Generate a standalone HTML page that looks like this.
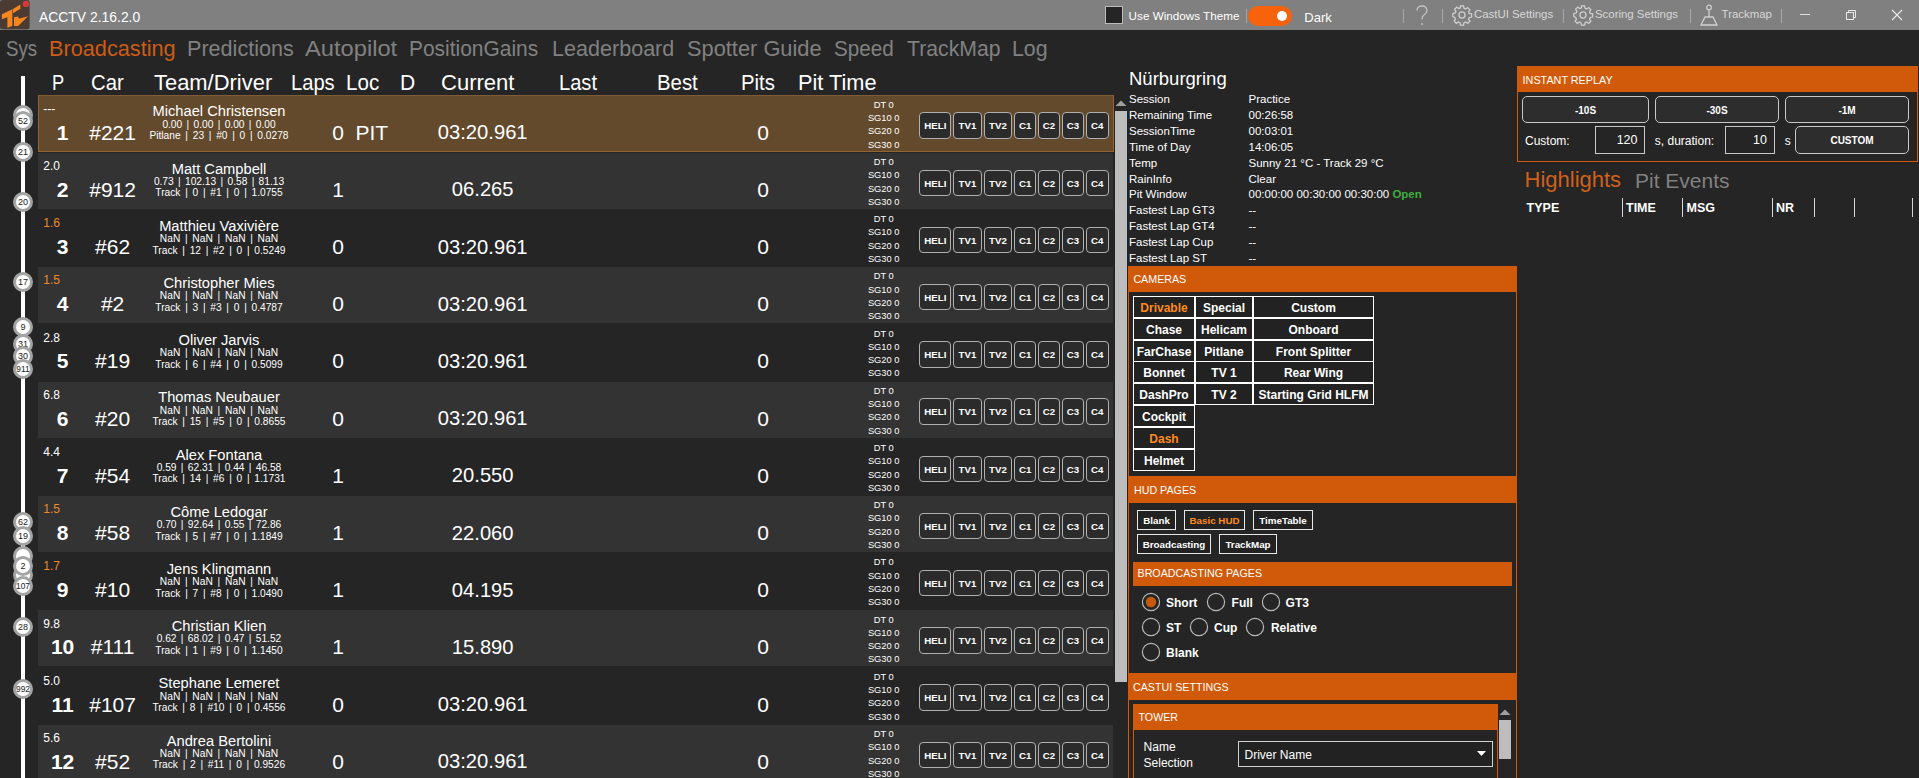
<!DOCTYPE html>
<html><head><meta charset="utf-8"><style>
html,body{margin:0;padding:0;}
body{width:1919px;height:778px;overflow:hidden;background:#252525;position:relative;font-family:"Liberation Sans",sans-serif;}
.t{position:absolute;line-height:1;white-space:nowrap;}
.r{position:absolute;}
.btn{position:absolute;box-sizing:border-box;border:1px solid #b0b0b0;border-radius:4px;background:#2b2b2b;color:#fff;font-weight:bold;font-size:9.7px;text-align:center;}
.mk{position:absolute;left:13px;width:20px;height:20px;box-sizing:border-box;border:3px solid #a4a4a4;border-radius:50%;background:#fff;text-align:center;line-height:14px;color:#1a1a1a;}
.cell{position:absolute;box-sizing:border-box;border:1px solid #fff;background:#222;font-weight:bold;font-size:12px;text-align:center;}
.hud{position:absolute;box-sizing:border-box;border:1px solid #e8e8e8;background:#222;font-weight:bold;font-size:9.8px;text-align:center;}
.rb{position:absolute;box-sizing:border-box;border:1.5px solid #c8c8c8;border-radius:5px;background:#2d2d2d;color:#fff;font-weight:bold;font-size:10px;text-align:center;}
</style></head><body>
<div class="r" style="left:0px;top:0px;width:1919px;height:30px;background:#808080"></div>
<svg class="r" style="left:0;top:0" width="30" height="30" viewBox="0 0 30 30">
<rect x="0" y="0" width="29.6" height="29.3" rx="2.5" fill="#4b3b32"/>
<path d="M1.85 14.2 L12.35 9.25 L12.35 25.7 L7.4 28 L7.4 17.3 L1.85 19.3 Z" fill="#f7861f"/>
<path d="M13 9.05 L20.4 4.5 L20.4 8.85 L13 13.2 Z" fill="#f7861f"/>
<path d="M14 17.3 L18.1 16.5 L18.9 18.7 L28 16.2 L18.1 25.9 L14 25.9 Z" fill="#f7861f"/>
<circle cx="25.9" cy="3.9" r="3.2" fill="#d43a3a"/>
</svg>
<div class="t" style="left:38.50px;top:9.65px;font-size:14px;color:#ffffff;transform:scaleX(0.9928);transform-origin:left;">ACCTV 2.16.2.0</div>
<div class="r" style="left:1105px;top:6px;width:18px;height:18px;background:#252525;border:1px solid #bcbcbc;box-sizing:border-box"></div>
<div class="t" style="left:1128.60px;top:10.10px;font-size:11.7px;color:#ffffff;">Use Windows Theme</div>
<div class="r" style="left:1246px;top:9px;width:1px;height:14px;background:#a8a8a8"></div>
<div class="r" style="left:1248px;top:6px;width:44px;height:20px;background:#f7630c;border-radius:10px"></div>
<div class="r" style="left:1277px;top:11px;width:10px;height:10px;background:#fff;border-radius:50%"></div>
<div class="t" style="left:1304.30px;top:10.90px;font-size:13px;color:#ffffff;">Dark</div>
<div class="r" style="left:1403px;top:9px;width:1px;height:14px;background:#a8a8a8"></div>
<svg class="r" style="left:1415px;top:5px" width="14" height="21" viewBox="0 0 14 21"><path d="M2 5.5 C2 2.5 4.5 1 7 1 C10 1 12 3 12 5.5 C12 8 10.5 9 8.5 10.5 C7.3 11.4 7 12.5 7 14.5" fill="none" stroke="#c4c4c4" stroke-width="1.3"/><circle cx="7" cy="19" r="0.9" fill="#c4c4c4"/></svg>
<div class="r" style="left:1442px;top:9px;width:1px;height:14px;background:#a8a8a8"></div>
<svg class="r" style="left:1451px;top:4px" width="22" height="22" viewBox="0 0 24 24"><path fill="none" stroke="#cfcfcf" stroke-width="1.4" d="M10.3 2h3.4l.5 2.6 1.8.8 2.2-1.5 2.4 2.4-1.5 2.2.8 1.8 2.6.5v3.4l-2.6.5-.8 1.8 1.5 2.2-2.4 2.4-2.2-1.5-1.8.8-.5 2.6h-3.4l-.5-2.6-1.8-.8-2.2 1.5-2.4-2.4 1.5-2.2-.8-1.8L2 13.7v-3.4l2.6-.5.8-1.8-1.5-2.2 2.4-2.4 2.2 1.5 1.8-.8z"/><circle cx="12" cy="12" r="3.3" fill="none" stroke="#cfcfcf" stroke-width="1.4"/></svg>
<div class="t" style="left:1474.00px;top:8.95px;font-size:11.4px;color:#d8d8d8;">CastUI Settings</div>
<div class="r" style="left:1563px;top:9px;width:1px;height:14px;background:#a8a8a8"></div>
<svg class="r" style="left:1572px;top:4px" width="22" height="22" viewBox="0 0 24 24"><path fill="none" stroke="#cfcfcf" stroke-width="1.4" d="M10.3 2h3.4l.5 2.6 1.8.8 2.2-1.5 2.4 2.4-1.5 2.2.8 1.8 2.6.5v3.4l-2.6.5-.8 1.8 1.5 2.2-2.4 2.4-2.2-1.5-1.8.8-.5 2.6h-3.4l-.5-2.6-1.8-.8-2.2 1.5-2.4-2.4 1.5-2.2-.8-1.8L2 13.7v-3.4l2.6-.5.8-1.8-1.5-2.2 2.4-2.4 2.2 1.5 1.8-.8z"/><circle cx="12" cy="12" r="3.3" fill="none" stroke="#cfcfcf" stroke-width="1.4"/></svg>
<div class="t" style="left:1595.00px;top:8.95px;font-size:11.4px;color:#d8d8d8;">Scoring Settings</div>
<div class="r" style="left:1690px;top:9px;width:1px;height:14px;background:#a8a8a8"></div>
<svg class="r" style="left:1699px;top:4px" width="20" height="22" viewBox="0 0 20 22"><circle cx="10" cy="3.5" r="2.3" fill="none" stroke="#cfcfcf" stroke-width="1.3"/><path d="M10 6 V13 M6 13 H14 L18 21 H2 L6 13 Z" fill="none" stroke="#cfcfcf" stroke-width="1.3"/></svg>
<div class="t" style="left:1721.60px;top:8.95px;font-size:11.4px;color:#d8d8d8;">Trackmap</div>
<div class="r" style="left:1781px;top:9px;width:1px;height:14px;background:#a8a8a8"></div>
<div class="r" style="left:1800px;top:14px;width:10px;height:1px;background:#e0e0e0"></div>
<svg class="r" style="left:1845px;top:9px" width="12" height="12" viewBox="0 0 12 12"><rect x="1.5" y="3.5" width="7" height="7" fill="none" stroke="#e8e8e8" stroke-width="1"/><path d="M3.5 3.5 V1.5 H10.5 V8.5 H8.5" fill="none" stroke="#e8e8e8" stroke-width="1"/></svg>
<svg class="r" style="left:1891px;top:9px" width="12" height="12" viewBox="0 0 12 12"><path d="M1 1 L11 11 M11 1 L1 11" stroke="#eaeaea" stroke-width="1.1"/></svg>
<div class="t" style="left:5.60px;top:38.25px;font-size:22.5px;color:#818181;transform:scaleX(0.8317);transform-origin:left;">Sys</div>
<div class="t" style="left:48.80px;top:38.25px;font-size:22.5px;color:#cc5c16;transform:scaleX(0.9646);transform-origin:left;">Broadcasting</div>
<div class="t" style="left:186.80px;top:38.25px;font-size:22.5px;color:#818181;transform:scaleX(0.9595);transform-origin:left;">Predictions</div>
<div class="t" style="left:305.20px;top:38.25px;font-size:22.5px;color:#818181;transform:scaleX(1.0530);transform-origin:left;">Autopilot</div>
<div class="t" style="left:409.20px;top:38.25px;font-size:22.5px;color:#818181;transform:scaleX(0.9306);transform-origin:left;">PositionGains</div>
<div class="t" style="left:552.00px;top:38.25px;font-size:22.5px;color:#818181;transform:scaleX(0.9584);transform-origin:left;">Leaderboard</div>
<div class="t" style="left:686.80px;top:38.25px;font-size:22.5px;color:#818181;transform:scaleX(0.9694);transform-origin:left;">Spotter Guide</div>
<div class="t" style="left:834.00px;top:38.25px;font-size:22.5px;color:#818181;transform:scaleX(0.9176);transform-origin:left;">Speed</div>
<div class="t" style="left:906.90px;top:38.25px;font-size:22.5px;color:#818181;transform:scaleX(0.9427);transform-origin:left;">TrackMap</div>
<div class="t" style="left:1011.80px;top:38.25px;font-size:22.5px;color:#818181;transform:scaleX(0.9481);transform-origin:left;">Log</div>
<div class="t" style="left:52.00px;top:72.60px;font-size:21.5px;color:#ffffff;transform:scaleX(0.8505);transform-origin:left;">P</div>
<div class="t" style="left:91.40px;top:72.60px;font-size:21.5px;color:#ffffff;transform:scaleX(0.9464);transform-origin:left;">Car</div>
<div class="t" style="left:153.80px;top:72.60px;font-size:21.5px;color:#ffffff;transform:scaleX(1.0199);transform-origin:left;">Team/Driver</div>
<div class="t" style="left:290.50px;top:72.60px;font-size:21.5px;color:#ffffff;transform:scaleX(0.9373);transform-origin:left;">Laps</div>
<div class="t" style="left:346.00px;top:72.60px;font-size:21.5px;color:#ffffff;transform:scaleX(0.9575);transform-origin:left;">Loc</div>
<div class="t" style="left:400.00px;top:72.60px;font-size:21.5px;color:#ffffff;transform:scaleX(0.9787);transform-origin:left;">D</div>
<div class="t" style="left:440.70px;top:72.60px;font-size:21.5px;color:#ffffff;transform:scaleX(1.0251);transform-origin:left;">Current</div>
<div class="t" style="left:558.70px;top:72.60px;font-size:21.5px;color:#ffffff;transform:scaleX(0.9350);transform-origin:left;">Last</div>
<div class="t" style="left:657.40px;top:72.60px;font-size:21.5px;color:#ffffff;transform:scaleX(0.9481);transform-origin:left;">Best</div>
<div class="t" style="left:740.60px;top:72.60px;font-size:21.5px;color:#ffffff;transform:scaleX(0.9458);transform-origin:left;">Pits</div>
<div class="t" style="left:798.40px;top:72.60px;font-size:21.5px;color:#ffffff;transform:scaleX(1.0122);transform-origin:left;">Pit Time</div>
<div class="r" style="left:21px;top:76px;width:4px;height:702px;background:#ffffff"></div>
<div class="r" style="left:38px;top:95.0px;width:1076px;height:57px;background:#634a2c;border:1px solid #94652f;border-top-color:#7f5c33;box-sizing:border-box"></div>
<div class="t" style="left:43.30px;top:102.84px;font-size:12px;color:#fff;">---</div>
<div class="t" style="left:-237.40px;width:600px;text-align:center;top:121.52px;font-size:21px;color:#fff;font-weight:bold;">1</div>
<div class="t" style="left:-187.40px;width:600px;text-align:center;top:121.52px;font-size:21px;color:#fff;">#221</div>
<div class="t" style="left:-81.00px;width:600px;text-align:center;top:104.36px;font-size:14.7px;color:#fff;">Michael Christensen</div>
<div class="t" style="left:-81.00px;width:600px;text-align:center;top:119.67px;font-size:10.2px;color:#fff;word-spacing:1.5px">0.00 | 0.00 | 0.00 | 0.00</div>
<div class="t" style="left:-81.00px;width:600px;text-align:center;top:131.17px;font-size:10.2px;color:#fff;word-spacing:1.9px">Pitlane | 23 | #0 | 0 | 0.0278</div>
<div class="t" style="left:38.00px;width:600px;text-align:center;top:121.52px;font-size:21px;color:#fff;">0</div>
<div class="t" style="left:355.40px;top:121.52px;font-size:21px;color:#fff;">PIT</div>
<div class="t" style="left:182.70px;width:600px;text-align:center;top:122.20px;font-size:20.2px;color:#fff;">03:20.961</div>
<div class="t" style="left:463.00px;width:600px;text-align:center;top:121.52px;font-size:21px;color:#fff;">0</div>
<div class="t" style="left:583.70px;width:600px;text-align:center;top:100.73px;font-size:9.3px;color:#fff;">DT 0</div>
<div class="t" style="left:583.70px;width:600px;text-align:center;top:113.93px;font-size:9.3px;color:#fff;">SG10 0</div>
<div class="t" style="left:583.70px;width:600px;text-align:center;top:127.43px;font-size:9.3px;color:#fff;">SG20 0</div>
<div class="t" style="left:583.70px;width:600px;text-align:center;top:140.63px;font-size:9.3px;color:#fff;">SG30 0</div>
<div class="btn" style="left:919.3px;top:112.3px;width:32.2px;height:26.5px;line-height:26px">HELI</div>
<div class="btn" style="left:952.8px;top:112.3px;width:29.4px;height:26.5px;line-height:26px">TV1</div>
<div class="btn" style="left:983.6px;top:112.3px;width:28.8px;height:26.5px;line-height:26px">TV2</div>
<div class="btn" style="left:1013.8px;top:112.3px;width:22.6px;height:26.5px;line-height:26px">C1</div>
<div class="btn" style="left:1037.8px;top:112.3px;width:22.4px;height:26.5px;line-height:26px">C2</div>
<div class="btn" style="left:1061.9px;top:112.3px;width:22.3px;height:26.5px;line-height:26px">C3</div>
<div class="btn" style="left:1085.6px;top:112.3px;width:23.0px;height:26.5px;line-height:26px">C4</div>
<div class="r" style="left:38px;top:153px;width:1075px;height:56px;background:#333333"></div>
<div class="t" style="left:43.30px;top:160.04px;font-size:12px;color:#fff;">2.0</div>
<div class="t" style="left:-237.40px;width:600px;text-align:center;top:178.72px;font-size:21px;color:#fff;font-weight:bold;">2</div>
<div class="t" style="left:-187.40px;width:600px;text-align:center;top:178.72px;font-size:21px;color:#fff;">#912</div>
<div class="t" style="left:-81.00px;width:600px;text-align:center;top:161.56px;font-size:14.7px;color:#fff;">Matt Campbell</div>
<div class="t" style="left:-81.00px;width:600px;text-align:center;top:176.87px;font-size:10.2px;color:#fff;word-spacing:1.5px">0.73 | 102.13 | 0.58 | 81.13</div>
<div class="t" style="left:-81.00px;width:600px;text-align:center;top:188.37px;font-size:10.2px;color:#fff;word-spacing:1.9px">Track | 0 | #1 | 0 | 1.0755</div>
<div class="t" style="left:38.00px;width:600px;text-align:center;top:178.72px;font-size:21px;color:#fff;">1</div>
<div class="t" style="left:182.70px;width:600px;text-align:center;top:179.40px;font-size:20.2px;color:#fff;">06.265</div>
<div class="t" style="left:463.00px;width:600px;text-align:center;top:178.72px;font-size:21px;color:#fff;">0</div>
<div class="t" style="left:583.70px;width:600px;text-align:center;top:157.93px;font-size:9.3px;color:#fff;">DT 0</div>
<div class="t" style="left:583.70px;width:600px;text-align:center;top:171.13px;font-size:9.3px;color:#fff;">SG10 0</div>
<div class="t" style="left:583.70px;width:600px;text-align:center;top:184.63px;font-size:9.3px;color:#fff;">SG20 0</div>
<div class="t" style="left:583.70px;width:600px;text-align:center;top:197.83px;font-size:9.3px;color:#fff;">SG30 0</div>
<div class="btn" style="left:919.3px;top:169.5px;width:32.2px;height:26.5px;line-height:26px">HELI</div>
<div class="btn" style="left:952.8px;top:169.5px;width:29.4px;height:26.5px;line-height:26px">TV1</div>
<div class="btn" style="left:983.6px;top:169.5px;width:28.8px;height:26.5px;line-height:26px">TV2</div>
<div class="btn" style="left:1013.8px;top:169.5px;width:22.6px;height:26.5px;line-height:26px">C1</div>
<div class="btn" style="left:1037.8px;top:169.5px;width:22.4px;height:26.5px;line-height:26px">C2</div>
<div class="btn" style="left:1061.9px;top:169.5px;width:22.3px;height:26.5px;line-height:26px">C3</div>
<div class="btn" style="left:1085.6px;top:169.5px;width:23.0px;height:26.5px;line-height:26px">C4</div>
<div class="t" style="left:43.30px;top:217.24px;font-size:12px;color:#f08a24;">1.6</div>
<div class="t" style="left:-237.40px;width:600px;text-align:center;top:235.92px;font-size:21px;color:#fff;font-weight:bold;">3</div>
<div class="t" style="left:-187.40px;width:600px;text-align:center;top:235.92px;font-size:21px;color:#fff;">#62</div>
<div class="t" style="left:-81.00px;width:600px;text-align:center;top:218.76px;font-size:14.7px;color:#fff;">Matthieu Vaxivière</div>
<div class="t" style="left:-81.00px;width:600px;text-align:center;top:234.07px;font-size:10.2px;color:#fff;word-spacing:1.6px;letter-spacing:0.12px">NaN | NaN | NaN | NaN</div>
<div class="t" style="left:-81.00px;width:600px;text-align:center;top:245.57px;font-size:10.2px;color:#fff;word-spacing:1.9px">Track | 12 | #2 | 0 | 0.5249</div>
<div class="t" style="left:38.00px;width:600px;text-align:center;top:235.92px;font-size:21px;color:#fff;">0</div>
<div class="t" style="left:182.70px;width:600px;text-align:center;top:236.60px;font-size:20.2px;color:#fff;">03:20.961</div>
<div class="t" style="left:463.00px;width:600px;text-align:center;top:235.92px;font-size:21px;color:#fff;">0</div>
<div class="t" style="left:583.70px;width:600px;text-align:center;top:215.13px;font-size:9.3px;color:#fff;">DT 0</div>
<div class="t" style="left:583.70px;width:600px;text-align:center;top:228.33px;font-size:9.3px;color:#fff;">SG10 0</div>
<div class="t" style="left:583.70px;width:600px;text-align:center;top:241.83px;font-size:9.3px;color:#fff;">SG20 0</div>
<div class="t" style="left:583.70px;width:600px;text-align:center;top:255.03px;font-size:9.3px;color:#fff;">SG30 0</div>
<div class="btn" style="left:919.3px;top:226.7px;width:32.2px;height:26.5px;line-height:26px">HELI</div>
<div class="btn" style="left:952.8px;top:226.7px;width:29.4px;height:26.5px;line-height:26px">TV1</div>
<div class="btn" style="left:983.6px;top:226.7px;width:28.8px;height:26.5px;line-height:26px">TV2</div>
<div class="btn" style="left:1013.8px;top:226.7px;width:22.6px;height:26.5px;line-height:26px">C1</div>
<div class="btn" style="left:1037.8px;top:226.7px;width:22.4px;height:26.5px;line-height:26px">C2</div>
<div class="btn" style="left:1061.9px;top:226.7px;width:22.3px;height:26.5px;line-height:26px">C3</div>
<div class="btn" style="left:1085.6px;top:226.7px;width:23.0px;height:26.5px;line-height:26px">C4</div>
<div class="r" style="left:38px;top:267px;width:1075px;height:56px;background:#333333"></div>
<div class="t" style="left:43.30px;top:274.44px;font-size:12px;color:#f08a24;">1.5</div>
<div class="t" style="left:-237.40px;width:600px;text-align:center;top:293.12px;font-size:21px;color:#fff;font-weight:bold;">4</div>
<div class="t" style="left:-187.40px;width:600px;text-align:center;top:293.12px;font-size:21px;color:#fff;">#2</div>
<div class="t" style="left:-81.00px;width:600px;text-align:center;top:275.96px;font-size:14.7px;color:#fff;">Christopher Mies</div>
<div class="t" style="left:-81.00px;width:600px;text-align:center;top:291.27px;font-size:10.2px;color:#fff;word-spacing:1.6px;letter-spacing:0.12px">NaN | NaN | NaN | NaN</div>
<div class="t" style="left:-81.00px;width:600px;text-align:center;top:302.77px;font-size:10.2px;color:#fff;word-spacing:1.9px">Track | 3 | #3 | 0 | 0.4787</div>
<div class="t" style="left:38.00px;width:600px;text-align:center;top:293.12px;font-size:21px;color:#fff;">0</div>
<div class="t" style="left:182.70px;width:600px;text-align:center;top:293.80px;font-size:20.2px;color:#fff;">03:20.961</div>
<div class="t" style="left:463.00px;width:600px;text-align:center;top:293.12px;font-size:21px;color:#fff;">0</div>
<div class="t" style="left:583.70px;width:600px;text-align:center;top:272.33px;font-size:9.3px;color:#fff;">DT 0</div>
<div class="t" style="left:583.70px;width:600px;text-align:center;top:285.53px;font-size:9.3px;color:#fff;">SG10 0</div>
<div class="t" style="left:583.70px;width:600px;text-align:center;top:299.03px;font-size:9.3px;color:#fff;">SG20 0</div>
<div class="t" style="left:583.70px;width:600px;text-align:center;top:312.23px;font-size:9.3px;color:#fff;">SG30 0</div>
<div class="btn" style="left:919.3px;top:283.9px;width:32.2px;height:26.5px;line-height:26px">HELI</div>
<div class="btn" style="left:952.8px;top:283.9px;width:29.4px;height:26.5px;line-height:26px">TV1</div>
<div class="btn" style="left:983.6px;top:283.9px;width:28.8px;height:26.5px;line-height:26px">TV2</div>
<div class="btn" style="left:1013.8px;top:283.9px;width:22.6px;height:26.5px;line-height:26px">C1</div>
<div class="btn" style="left:1037.8px;top:283.9px;width:22.4px;height:26.5px;line-height:26px">C2</div>
<div class="btn" style="left:1061.9px;top:283.9px;width:22.3px;height:26.5px;line-height:26px">C3</div>
<div class="btn" style="left:1085.6px;top:283.9px;width:23.0px;height:26.5px;line-height:26px">C4</div>
<div class="t" style="left:43.30px;top:331.64px;font-size:12px;color:#fff;">2.8</div>
<div class="t" style="left:-237.40px;width:600px;text-align:center;top:350.32px;font-size:21px;color:#fff;font-weight:bold;">5</div>
<div class="t" style="left:-187.40px;width:600px;text-align:center;top:350.32px;font-size:21px;color:#fff;">#19</div>
<div class="t" style="left:-81.00px;width:600px;text-align:center;top:333.16px;font-size:14.7px;color:#fff;">Oliver Jarvis</div>
<div class="t" style="left:-81.00px;width:600px;text-align:center;top:348.47px;font-size:10.2px;color:#fff;word-spacing:1.6px;letter-spacing:0.12px">NaN | NaN | NaN | NaN</div>
<div class="t" style="left:-81.00px;width:600px;text-align:center;top:359.97px;font-size:10.2px;color:#fff;word-spacing:1.9px">Track | 6 | #4 | 0 | 0.5099</div>
<div class="t" style="left:38.00px;width:600px;text-align:center;top:350.32px;font-size:21px;color:#fff;">0</div>
<div class="t" style="left:182.70px;width:600px;text-align:center;top:351.00px;font-size:20.2px;color:#fff;">03:20.961</div>
<div class="t" style="left:463.00px;width:600px;text-align:center;top:350.32px;font-size:21px;color:#fff;">0</div>
<div class="t" style="left:583.70px;width:600px;text-align:center;top:329.53px;font-size:9.3px;color:#fff;">DT 0</div>
<div class="t" style="left:583.70px;width:600px;text-align:center;top:342.73px;font-size:9.3px;color:#fff;">SG10 0</div>
<div class="t" style="left:583.70px;width:600px;text-align:center;top:356.23px;font-size:9.3px;color:#fff;">SG20 0</div>
<div class="t" style="left:583.70px;width:600px;text-align:center;top:369.43px;font-size:9.3px;color:#fff;">SG30 0</div>
<div class="btn" style="left:919.3px;top:341.1px;width:32.2px;height:26.5px;line-height:26px">HELI</div>
<div class="btn" style="left:952.8px;top:341.1px;width:29.4px;height:26.5px;line-height:26px">TV1</div>
<div class="btn" style="left:983.6px;top:341.1px;width:28.8px;height:26.5px;line-height:26px">TV2</div>
<div class="btn" style="left:1013.8px;top:341.1px;width:22.6px;height:26.5px;line-height:26px">C1</div>
<div class="btn" style="left:1037.8px;top:341.1px;width:22.4px;height:26.5px;line-height:26px">C2</div>
<div class="btn" style="left:1061.9px;top:341.1px;width:22.3px;height:26.5px;line-height:26px">C3</div>
<div class="btn" style="left:1085.6px;top:341.1px;width:23.0px;height:26.5px;line-height:26px">C4</div>
<div class="r" style="left:38px;top:382px;width:1075px;height:56px;background:#333333"></div>
<div class="t" style="left:43.30px;top:388.84px;font-size:12px;color:#fff;">6.8</div>
<div class="t" style="left:-237.40px;width:600px;text-align:center;top:407.52px;font-size:21px;color:#fff;font-weight:bold;">6</div>
<div class="t" style="left:-187.40px;width:600px;text-align:center;top:407.52px;font-size:21px;color:#fff;">#20</div>
<div class="t" style="left:-81.00px;width:600px;text-align:center;top:390.36px;font-size:14.7px;color:#fff;">Thomas Neubauer</div>
<div class="t" style="left:-81.00px;width:600px;text-align:center;top:405.67px;font-size:10.2px;color:#fff;word-spacing:1.6px;letter-spacing:0.12px">NaN | NaN | NaN | NaN</div>
<div class="t" style="left:-81.00px;width:600px;text-align:center;top:417.17px;font-size:10.2px;color:#fff;word-spacing:1.9px">Track | 15 | #5 | 0 | 0.8655</div>
<div class="t" style="left:38.00px;width:600px;text-align:center;top:407.52px;font-size:21px;color:#fff;">0</div>
<div class="t" style="left:182.70px;width:600px;text-align:center;top:408.20px;font-size:20.2px;color:#fff;">03:20.961</div>
<div class="t" style="left:463.00px;width:600px;text-align:center;top:407.52px;font-size:21px;color:#fff;">0</div>
<div class="t" style="left:583.70px;width:600px;text-align:center;top:386.73px;font-size:9.3px;color:#fff;">DT 0</div>
<div class="t" style="left:583.70px;width:600px;text-align:center;top:399.93px;font-size:9.3px;color:#fff;">SG10 0</div>
<div class="t" style="left:583.70px;width:600px;text-align:center;top:413.43px;font-size:9.3px;color:#fff;">SG20 0</div>
<div class="t" style="left:583.70px;width:600px;text-align:center;top:426.63px;font-size:9.3px;color:#fff;">SG30 0</div>
<div class="btn" style="left:919.3px;top:398.3px;width:32.2px;height:26.5px;line-height:26px">HELI</div>
<div class="btn" style="left:952.8px;top:398.3px;width:29.4px;height:26.5px;line-height:26px">TV1</div>
<div class="btn" style="left:983.6px;top:398.3px;width:28.8px;height:26.5px;line-height:26px">TV2</div>
<div class="btn" style="left:1013.8px;top:398.3px;width:22.6px;height:26.5px;line-height:26px">C1</div>
<div class="btn" style="left:1037.8px;top:398.3px;width:22.4px;height:26.5px;line-height:26px">C2</div>
<div class="btn" style="left:1061.9px;top:398.3px;width:22.3px;height:26.5px;line-height:26px">C3</div>
<div class="btn" style="left:1085.6px;top:398.3px;width:23.0px;height:26.5px;line-height:26px">C4</div>
<div class="t" style="left:43.30px;top:446.04px;font-size:12px;color:#fff;">4.4</div>
<div class="t" style="left:-237.40px;width:600px;text-align:center;top:464.72px;font-size:21px;color:#fff;font-weight:bold;">7</div>
<div class="t" style="left:-187.40px;width:600px;text-align:center;top:464.72px;font-size:21px;color:#fff;">#54</div>
<div class="t" style="left:-81.00px;width:600px;text-align:center;top:447.56px;font-size:14.7px;color:#fff;">Alex Fontana</div>
<div class="t" style="left:-81.00px;width:600px;text-align:center;top:462.87px;font-size:10.2px;color:#fff;word-spacing:1.5px">0.59 | 62.31 | 0.44 | 46.58</div>
<div class="t" style="left:-81.00px;width:600px;text-align:center;top:474.37px;font-size:10.2px;color:#fff;word-spacing:1.9px">Track | 14 | #6 | 0 | 1.1731</div>
<div class="t" style="left:38.00px;width:600px;text-align:center;top:464.72px;font-size:21px;color:#fff;">1</div>
<div class="t" style="left:182.70px;width:600px;text-align:center;top:465.40px;font-size:20.2px;color:#fff;">20.550</div>
<div class="t" style="left:463.00px;width:600px;text-align:center;top:464.72px;font-size:21px;color:#fff;">0</div>
<div class="t" style="left:583.70px;width:600px;text-align:center;top:443.93px;font-size:9.3px;color:#fff;">DT 0</div>
<div class="t" style="left:583.70px;width:600px;text-align:center;top:457.13px;font-size:9.3px;color:#fff;">SG10 0</div>
<div class="t" style="left:583.70px;width:600px;text-align:center;top:470.63px;font-size:9.3px;color:#fff;">SG20 0</div>
<div class="t" style="left:583.70px;width:600px;text-align:center;top:483.83px;font-size:9.3px;color:#fff;">SG30 0</div>
<div class="btn" style="left:919.3px;top:455.5px;width:32.2px;height:26.5px;line-height:26px">HELI</div>
<div class="btn" style="left:952.8px;top:455.5px;width:29.4px;height:26.5px;line-height:26px">TV1</div>
<div class="btn" style="left:983.6px;top:455.5px;width:28.8px;height:26.5px;line-height:26px">TV2</div>
<div class="btn" style="left:1013.8px;top:455.5px;width:22.6px;height:26.5px;line-height:26px">C1</div>
<div class="btn" style="left:1037.8px;top:455.5px;width:22.4px;height:26.5px;line-height:26px">C2</div>
<div class="btn" style="left:1061.9px;top:455.5px;width:22.3px;height:26.5px;line-height:26px">C3</div>
<div class="btn" style="left:1085.6px;top:455.5px;width:23.0px;height:26.5px;line-height:26px">C4</div>
<div class="r" style="left:38px;top:496px;width:1075px;height:56px;background:#333333"></div>
<div class="t" style="left:43.30px;top:503.24px;font-size:12px;color:#f08a24;">1.5</div>
<div class="t" style="left:-237.40px;width:600px;text-align:center;top:521.92px;font-size:21px;color:#fff;font-weight:bold;">8</div>
<div class="t" style="left:-187.40px;width:600px;text-align:center;top:521.92px;font-size:21px;color:#fff;">#58</div>
<div class="t" style="left:-81.00px;width:600px;text-align:center;top:504.76px;font-size:14.7px;color:#fff;">Côme Ledogar</div>
<div class="t" style="left:-81.00px;width:600px;text-align:center;top:520.07px;font-size:10.2px;color:#fff;word-spacing:1.5px">0.70 | 92.64 | 0.55 | 72.86</div>
<div class="t" style="left:-81.00px;width:600px;text-align:center;top:531.57px;font-size:10.2px;color:#fff;word-spacing:1.9px">Track | 5 | #7 | 0 | 1.1849</div>
<div class="t" style="left:38.00px;width:600px;text-align:center;top:521.92px;font-size:21px;color:#fff;">1</div>
<div class="t" style="left:182.70px;width:600px;text-align:center;top:522.60px;font-size:20.2px;color:#fff;">22.060</div>
<div class="t" style="left:463.00px;width:600px;text-align:center;top:521.92px;font-size:21px;color:#fff;">0</div>
<div class="t" style="left:583.70px;width:600px;text-align:center;top:501.13px;font-size:9.3px;color:#fff;">DT 0</div>
<div class="t" style="left:583.70px;width:600px;text-align:center;top:514.33px;font-size:9.3px;color:#fff;">SG10 0</div>
<div class="t" style="left:583.70px;width:600px;text-align:center;top:527.83px;font-size:9.3px;color:#fff;">SG20 0</div>
<div class="t" style="left:583.70px;width:600px;text-align:center;top:541.03px;font-size:9.3px;color:#fff;">SG30 0</div>
<div class="btn" style="left:919.3px;top:512.7px;width:32.2px;height:26.5px;line-height:26px">HELI</div>
<div class="btn" style="left:952.8px;top:512.7px;width:29.4px;height:26.5px;line-height:26px">TV1</div>
<div class="btn" style="left:983.6px;top:512.7px;width:28.8px;height:26.5px;line-height:26px">TV2</div>
<div class="btn" style="left:1013.8px;top:512.7px;width:22.6px;height:26.5px;line-height:26px">C1</div>
<div class="btn" style="left:1037.8px;top:512.7px;width:22.4px;height:26.5px;line-height:26px">C2</div>
<div class="btn" style="left:1061.9px;top:512.7px;width:22.3px;height:26.5px;line-height:26px">C3</div>
<div class="btn" style="left:1085.6px;top:512.7px;width:23.0px;height:26.5px;line-height:26px">C4</div>
<div class="t" style="left:43.30px;top:560.44px;font-size:12px;color:#f08a24;">1.7</div>
<div class="t" style="left:-237.40px;width:600px;text-align:center;top:579.12px;font-size:21px;color:#fff;font-weight:bold;">9</div>
<div class="t" style="left:-187.40px;width:600px;text-align:center;top:579.12px;font-size:21px;color:#fff;">#10</div>
<div class="t" style="left:-81.00px;width:600px;text-align:center;top:561.96px;font-size:14.7px;color:#fff;">Jens Klingmann</div>
<div class="t" style="left:-81.00px;width:600px;text-align:center;top:577.27px;font-size:10.2px;color:#fff;word-spacing:1.6px;letter-spacing:0.12px">NaN | NaN | NaN | NaN</div>
<div class="t" style="left:-81.00px;width:600px;text-align:center;top:588.77px;font-size:10.2px;color:#fff;word-spacing:1.9px">Track | 7 | #8 | 0 | 1.0490</div>
<div class="t" style="left:38.00px;width:600px;text-align:center;top:579.12px;font-size:21px;color:#fff;">1</div>
<div class="t" style="left:182.70px;width:600px;text-align:center;top:579.80px;font-size:20.2px;color:#fff;">04.195</div>
<div class="t" style="left:463.00px;width:600px;text-align:center;top:579.12px;font-size:21px;color:#fff;">0</div>
<div class="t" style="left:583.70px;width:600px;text-align:center;top:558.33px;font-size:9.3px;color:#fff;">DT 0</div>
<div class="t" style="left:583.70px;width:600px;text-align:center;top:571.53px;font-size:9.3px;color:#fff;">SG10 0</div>
<div class="t" style="left:583.70px;width:600px;text-align:center;top:585.03px;font-size:9.3px;color:#fff;">SG20 0</div>
<div class="t" style="left:583.70px;width:600px;text-align:center;top:598.23px;font-size:9.3px;color:#fff;">SG30 0</div>
<div class="btn" style="left:919.3px;top:569.9px;width:32.2px;height:26.5px;line-height:26px">HELI</div>
<div class="btn" style="left:952.8px;top:569.9px;width:29.4px;height:26.5px;line-height:26px">TV1</div>
<div class="btn" style="left:983.6px;top:569.9px;width:28.8px;height:26.5px;line-height:26px">TV2</div>
<div class="btn" style="left:1013.8px;top:569.9px;width:22.6px;height:26.5px;line-height:26px">C1</div>
<div class="btn" style="left:1037.8px;top:569.9px;width:22.4px;height:26.5px;line-height:26px">C2</div>
<div class="btn" style="left:1061.9px;top:569.9px;width:22.3px;height:26.5px;line-height:26px">C3</div>
<div class="btn" style="left:1085.6px;top:569.9px;width:23.0px;height:26.5px;line-height:26px">C4</div>
<div class="r" style="left:38px;top:610px;width:1075px;height:56px;background:#333333"></div>
<div class="t" style="left:43.30px;top:617.64px;font-size:12px;color:#fff;">9.8</div>
<div class="t" style="left:-237.40px;width:600px;text-align:center;top:636.32px;font-size:21px;color:#fff;font-weight:bold;">10</div>
<div class="t" style="left:-187.40px;width:600px;text-align:center;top:636.32px;font-size:21px;color:#fff;">#111</div>
<div class="t" style="left:-81.00px;width:600px;text-align:center;top:619.16px;font-size:14.7px;color:#fff;">Christian Klien</div>
<div class="t" style="left:-81.00px;width:600px;text-align:center;top:634.47px;font-size:10.2px;color:#fff;word-spacing:1.5px">0.62 | 68.02 | 0.47 | 51.52</div>
<div class="t" style="left:-81.00px;width:600px;text-align:center;top:645.97px;font-size:10.2px;color:#fff;word-spacing:1.9px">Track | 1 | #9 | 0 | 1.1450</div>
<div class="t" style="left:38.00px;width:600px;text-align:center;top:636.32px;font-size:21px;color:#fff;">1</div>
<div class="t" style="left:182.70px;width:600px;text-align:center;top:637.00px;font-size:20.2px;color:#fff;">15.890</div>
<div class="t" style="left:463.00px;width:600px;text-align:center;top:636.32px;font-size:21px;color:#fff;">0</div>
<div class="t" style="left:583.70px;width:600px;text-align:center;top:615.53px;font-size:9.3px;color:#fff;">DT 0</div>
<div class="t" style="left:583.70px;width:600px;text-align:center;top:628.73px;font-size:9.3px;color:#fff;">SG10 0</div>
<div class="t" style="left:583.70px;width:600px;text-align:center;top:642.23px;font-size:9.3px;color:#fff;">SG20 0</div>
<div class="t" style="left:583.70px;width:600px;text-align:center;top:655.43px;font-size:9.3px;color:#fff;">SG30 0</div>
<div class="btn" style="left:919.3px;top:627.1px;width:32.2px;height:26.5px;line-height:26px">HELI</div>
<div class="btn" style="left:952.8px;top:627.1px;width:29.4px;height:26.5px;line-height:26px">TV1</div>
<div class="btn" style="left:983.6px;top:627.1px;width:28.8px;height:26.5px;line-height:26px">TV2</div>
<div class="btn" style="left:1013.8px;top:627.1px;width:22.6px;height:26.5px;line-height:26px">C1</div>
<div class="btn" style="left:1037.8px;top:627.1px;width:22.4px;height:26.5px;line-height:26px">C2</div>
<div class="btn" style="left:1061.9px;top:627.1px;width:22.3px;height:26.5px;line-height:26px">C3</div>
<div class="btn" style="left:1085.6px;top:627.1px;width:23.0px;height:26.5px;line-height:26px">C4</div>
<div class="t" style="left:43.30px;top:674.84px;font-size:12px;color:#fff;">5.0</div>
<div class="t" style="left:-237.40px;width:600px;text-align:center;top:693.52px;font-size:21px;color:#fff;font-weight:bold;">11</div>
<div class="t" style="left:-187.40px;width:600px;text-align:center;top:693.52px;font-size:21px;color:#fff;">#107</div>
<div class="t" style="left:-81.00px;width:600px;text-align:center;top:676.36px;font-size:14.7px;color:#fff;">Stephane Lemeret</div>
<div class="t" style="left:-81.00px;width:600px;text-align:center;top:691.67px;font-size:10.2px;color:#fff;word-spacing:1.6px;letter-spacing:0.12px">NaN | NaN | NaN | NaN</div>
<div class="t" style="left:-81.00px;width:600px;text-align:center;top:703.17px;font-size:10.2px;color:#fff;word-spacing:1.9px">Track | 8 | #10 | 0 | 0.4556</div>
<div class="t" style="left:38.00px;width:600px;text-align:center;top:693.52px;font-size:21px;color:#fff;">0</div>
<div class="t" style="left:182.70px;width:600px;text-align:center;top:694.20px;font-size:20.2px;color:#fff;">03:20.961</div>
<div class="t" style="left:463.00px;width:600px;text-align:center;top:693.52px;font-size:21px;color:#fff;">0</div>
<div class="t" style="left:583.70px;width:600px;text-align:center;top:672.73px;font-size:9.3px;color:#fff;">DT 0</div>
<div class="t" style="left:583.70px;width:600px;text-align:center;top:685.93px;font-size:9.3px;color:#fff;">SG10 0</div>
<div class="t" style="left:583.70px;width:600px;text-align:center;top:699.43px;font-size:9.3px;color:#fff;">SG20 0</div>
<div class="t" style="left:583.70px;width:600px;text-align:center;top:712.63px;font-size:9.3px;color:#fff;">SG30 0</div>
<div class="btn" style="left:919.3px;top:684.3px;width:32.2px;height:26.5px;line-height:26px">HELI</div>
<div class="btn" style="left:952.8px;top:684.3px;width:29.4px;height:26.5px;line-height:26px">TV1</div>
<div class="btn" style="left:983.6px;top:684.3px;width:28.8px;height:26.5px;line-height:26px">TV2</div>
<div class="btn" style="left:1013.8px;top:684.3px;width:22.6px;height:26.5px;line-height:26px">C1</div>
<div class="btn" style="left:1037.8px;top:684.3px;width:22.4px;height:26.5px;line-height:26px">C2</div>
<div class="btn" style="left:1061.9px;top:684.3px;width:22.3px;height:26.5px;line-height:26px">C3</div>
<div class="btn" style="left:1085.6px;top:684.3px;width:23.0px;height:26.5px;line-height:26px">C4</div>
<div class="r" style="left:38px;top:725px;width:1075px;height:56px;background:#333333"></div>
<div class="t" style="left:43.30px;top:732.04px;font-size:12px;color:#fff;">5.6</div>
<div class="t" style="left:-237.40px;width:600px;text-align:center;top:750.72px;font-size:21px;color:#fff;font-weight:bold;">12</div>
<div class="t" style="left:-187.40px;width:600px;text-align:center;top:750.72px;font-size:21px;color:#fff;">#52</div>
<div class="t" style="left:-81.00px;width:600px;text-align:center;top:733.56px;font-size:14.7px;color:#fff;">Andrea Bertolini</div>
<div class="t" style="left:-81.00px;width:600px;text-align:center;top:748.87px;font-size:10.2px;color:#fff;word-spacing:1.6px;letter-spacing:0.12px">NaN | NaN | NaN | NaN</div>
<div class="t" style="left:-81.00px;width:600px;text-align:center;top:760.37px;font-size:10.2px;color:#fff;word-spacing:1.9px">Track | 2 | #11 | 0 | 0.9526</div>
<div class="t" style="left:38.00px;width:600px;text-align:center;top:750.72px;font-size:21px;color:#fff;">0</div>
<div class="t" style="left:182.70px;width:600px;text-align:center;top:751.40px;font-size:20.2px;color:#fff;">03:20.961</div>
<div class="t" style="left:463.00px;width:600px;text-align:center;top:750.72px;font-size:21px;color:#fff;">0</div>
<div class="t" style="left:583.70px;width:600px;text-align:center;top:729.93px;font-size:9.3px;color:#fff;">DT 0</div>
<div class="t" style="left:583.70px;width:600px;text-align:center;top:743.13px;font-size:9.3px;color:#fff;">SG10 0</div>
<div class="t" style="left:583.70px;width:600px;text-align:center;top:756.63px;font-size:9.3px;color:#fff;">SG20 0</div>
<div class="t" style="left:583.70px;width:600px;text-align:center;top:769.83px;font-size:9.3px;color:#fff;">SG30 0</div>
<div class="btn" style="left:919.3px;top:741.5px;width:32.2px;height:26.5px;line-height:26px">HELI</div>
<div class="btn" style="left:952.8px;top:741.5px;width:29.4px;height:26.5px;line-height:26px">TV1</div>
<div class="btn" style="left:983.6px;top:741.5px;width:28.8px;height:26.5px;line-height:26px">TV2</div>
<div class="btn" style="left:1013.8px;top:741.5px;width:22.6px;height:26.5px;line-height:26px">C1</div>
<div class="btn" style="left:1037.8px;top:741.5px;width:22.4px;height:26.5px;line-height:26px">C2</div>
<div class="btn" style="left:1061.9px;top:741.5px;width:22.3px;height:26.5px;line-height:26px">C3</div>
<div class="btn" style="left:1085.6px;top:741.5px;width:23.0px;height:26.5px;line-height:26px">C4</div>
<div class="mk" style="top:105.0px;font-size:9px"></div>
<div class="mk" style="top:110.5px;font-size:9px">52</div>
<div class="mk" style="top:142.0px;font-size:9px">21</div>
<div class="mk" style="top:192.0px;font-size:9px">20</div>
<div class="mk" style="top:272.0px;font-size:9px">17</div>
<div class="mk" style="top:317.0px;font-size:9px">9</div>
<div class="mk" style="top:334.0px;font-size:9px">31</div>
<div class="mk" style="top:346.0px;font-size:9px">30</div>
<div class="mk" style="top:359.0px;font-size:8.4px">911</div>
<div class="mk" style="top:511.7px;font-size:9px">62</div>
<div class="mk" style="top:526.0px;font-size:9px">19</div>
<div class="mk" style="top:546.4px;font-size:9px"></div>
<div class="mk" style="top:564.5px;font-size:9px"></div>
<div class="mk" style="top:555.5px;font-size:9px">2</div>
<div class="mk" style="top:576.0px;font-size:8.4px">107</div>
<div class="mk" style="top:617.0px;font-size:9px">28</div>
<div class="mk" style="top:679.0px;font-size:8.4px">992</div>
<svg class="r" style="left:1115px;top:99px" width="12" height="8" viewBox="0 0 12 8"><path d="M0.5 7 L6 1.5 L11.5 7Z" fill="#a0a0a0"/></svg>
<div class="r" style="left:1115px;top:111px;width:12px;height:571px;background:#bdbdbd"></div>
<div class="t" style="left:1129.00px;top:69.54px;font-size:18.5px;color:#fff;">Nürburgring</div>
<div class="t" style="left:1129.00px;top:94.27px;font-size:11.5px;color:#fff;">Session</div>
<div class="t" style="left:1248.50px;top:94.27px;font-size:11.5px;color:#fff;">Practice</div>
<div class="t" style="left:1129.00px;top:110.14px;font-size:11.5px;color:#fff;">Remaining Time</div>
<div class="t" style="left:1248.50px;top:110.14px;font-size:11.5px;color:#fff;">00:26:58</div>
<div class="t" style="left:1129.00px;top:126.01px;font-size:11.5px;color:#fff;">SessionTime</div>
<div class="t" style="left:1248.50px;top:126.01px;font-size:11.5px;color:#fff;">00:03:01</div>
<div class="t" style="left:1129.00px;top:141.88px;font-size:11.5px;color:#fff;">Time of Day</div>
<div class="t" style="left:1248.50px;top:141.88px;font-size:11.5px;color:#fff;">14:06:05</div>
<div class="t" style="left:1129.00px;top:157.75px;font-size:11.5px;color:#fff;">Temp</div>
<div class="t" style="left:1248.50px;top:157.75px;font-size:11.5px;color:#fff;">Sunny 21 °C - Track 29 °C</div>
<div class="t" style="left:1129.00px;top:173.62px;font-size:11.5px;color:#fff;">RainInfo</div>
<div class="t" style="left:1248.50px;top:173.62px;font-size:11.5px;color:#fff;">Clear</div>
<div class="t" style="left:1129.00px;top:189.49px;font-size:11.5px;color:#fff;">Pit Window</div>
<div class="t" style="left:1248.50px;top:189.49px;font-size:11.5px;color:#fff;">00:00:00 00:30:00 00:30:00 <span style="color:#3fae3f;font-weight:bold">Open</span></div>
<div class="t" style="left:1129.00px;top:205.36px;font-size:11.5px;color:#fff;">Fastest Lap GT3</div>
<div class="t" style="left:1248.50px;top:205.36px;font-size:11.5px;color:#fff;">--</div>
<div class="t" style="left:1129.00px;top:221.23px;font-size:11.5px;color:#fff;">Fastest Lap GT4</div>
<div class="t" style="left:1248.50px;top:221.23px;font-size:11.5px;color:#fff;">--</div>
<div class="t" style="left:1129.00px;top:237.10px;font-size:11.5px;color:#fff;">Fastest Lap Cup</div>
<div class="t" style="left:1248.50px;top:237.10px;font-size:11.5px;color:#fff;">--</div>
<div class="t" style="left:1129.00px;top:252.97px;font-size:11.5px;color:#fff;">Fastest Lap ST</div>
<div class="t" style="left:1248.50px;top:252.97px;font-size:11.5px;color:#fff;">--</div>
<div class="r" style="left:1128px;top:266px;width:389px;height:512px;border-left:1px solid #d05a0a;border-right:1px solid #d05a0a;box-sizing:border-box"></div>
<div class="r" style="left:1128px;top:266px;width:389px;height:26px;background:#d05a0a"></div>
<div class="t" style="left:1133.40px;top:273.94px;font-size:10.7px;color:#fff;">CAMERAS</div>
<div class="cell" style="left:1133px;top:296.0px;width:62px;height:22px;line-height:22px;color:#ff8a1c">Drivable</div>
<div class="cell" style="left:1195px;top:296.0px;width:58px;height:22px;line-height:22px;color:#fff">Special</div>
<div class="cell" style="left:1253px;top:296.0px;width:121px;height:22px;line-height:22px;color:#fff">Custom</div>
<div class="cell" style="left:1133px;top:317.8px;width:62px;height:22px;line-height:22px;color:#fff">Chase</div>
<div class="cell" style="left:1195px;top:317.8px;width:58px;height:22px;line-height:22px;color:#fff">Helicam</div>
<div class="cell" style="left:1253px;top:317.8px;width:121px;height:22px;line-height:22px;color:#fff">Onboard</div>
<div class="cell" style="left:1133px;top:339.6px;width:62px;height:22px;line-height:22px;color:#fff">FarChase</div>
<div class="cell" style="left:1195px;top:339.6px;width:58px;height:22px;line-height:22px;color:#fff">Pitlane</div>
<div class="cell" style="left:1253px;top:339.6px;width:121px;height:22px;line-height:22px;color:#fff">Front Splitter</div>
<div class="cell" style="left:1133px;top:361.4px;width:62px;height:22px;line-height:22px;color:#fff">Bonnet</div>
<div class="cell" style="left:1195px;top:361.4px;width:58px;height:22px;line-height:22px;color:#fff">TV 1</div>
<div class="cell" style="left:1253px;top:361.4px;width:121px;height:22px;line-height:22px;color:#fff">Rear Wing</div>
<div class="cell" style="left:1133px;top:383.2px;width:62px;height:22px;line-height:22px;color:#fff">DashPro</div>
<div class="cell" style="left:1195px;top:383.2px;width:58px;height:22px;line-height:22px;color:#fff">TV 2</div>
<div class="cell" style="left:1253px;top:383.2px;width:121px;height:22px;line-height:22px;color:#fff">Starting Grid HLFM</div>
<div class="cell" style="left:1133px;top:405.0px;width:62px;height:22px;line-height:22px;color:#fff">Cockpit</div>
<div class="cell" style="left:1133px;top:426.8px;width:62px;height:22px;line-height:22px;color:#ff8a1c">Dash</div>
<div class="cell" style="left:1133px;top:448.6px;width:62px;height:22px;line-height:22px;color:#fff">Helmet</div>
<div class="r" style="left:1128px;top:476px;width:389px;height:27px;background:#d05a0a"></div>
<div class="t" style="left:1134.00px;top:484.94px;font-size:10.7px;color:#fff;">HUD PAGES</div>
<div class="hud" style="left:1137px;top:509.5px;width:39px;height:20px;line-height:19.5px;color:#fff">Blank</div>
<div class="hud" style="left:1184px;top:509.5px;width:61px;height:20px;line-height:19.5px;color:#ff8a1c">Basic HUD</div>
<div class="hud" style="left:1253px;top:509.5px;width:60px;height:20px;line-height:19.5px;color:#fff">TimeTable</div>
<div class="hud" style="left:1137px;top:534.2px;width:74px;height:20px;line-height:19.5px;color:#fff">Broadcasting</div>
<div class="hud" style="left:1219px;top:534.2px;width:58px;height:20px;line-height:19.5px;color:#fff">TrackMap</div>
<div class="r" style="left:1133px;top:562px;width:379px;height:24px;background:#d05a0a"></div>
<div class="t" style="left:1137.50px;top:568.34px;font-size:10.7px;color:#fff;">BROADCASTING PAGES</div>
<svg class="r" style="left:1141px;top:592px" width="20" height="20" viewBox="0 0 20 20"><circle cx="10" cy="10" r="8.6" fill="none" stroke="#b8b8b8" stroke-width="1.2"/><circle cx="10" cy="10" r="5.2" fill="#c55a0c"/></svg>
<div class="t" style="left:1166.00px;top:597.14px;font-size:12px;color:#fff;font-weight:bold;">Short</div>
<svg class="r" style="left:1206px;top:592px" width="20" height="20" viewBox="0 0 20 20"><circle cx="10" cy="10" r="8.6" fill="none" stroke="#b8b8b8" stroke-width="1.2"/></svg>
<div class="t" style="left:1231.60px;top:597.14px;font-size:12px;color:#fff;font-weight:bold;">Full</div>
<svg class="r" style="left:1261px;top:592px" width="20" height="20" viewBox="0 0 20 20"><circle cx="10" cy="10" r="8.6" fill="none" stroke="#b8b8b8" stroke-width="1.2"/></svg>
<div class="t" style="left:1285.60px;top:597.14px;font-size:12px;color:#fff;font-weight:bold;">GT3</div>
<svg class="r" style="left:1141px;top:617px" width="20" height="20" viewBox="0 0 20 20"><circle cx="10" cy="10" r="8.6" fill="none" stroke="#b8b8b8" stroke-width="1.2"/></svg>
<div class="t" style="left:1166.00px;top:622.14px;font-size:12px;color:#fff;font-weight:bold;">ST</div>
<svg class="r" style="left:1189px;top:617px" width="20" height="20" viewBox="0 0 20 20"><circle cx="10" cy="10" r="8.6" fill="none" stroke="#b8b8b8" stroke-width="1.2"/></svg>
<div class="t" style="left:1214.00px;top:622.14px;font-size:12px;color:#fff;font-weight:bold;">Cup</div>
<svg class="r" style="left:1245px;top:617px" width="20" height="20" viewBox="0 0 20 20"><circle cx="10" cy="10" r="8.6" fill="none" stroke="#b8b8b8" stroke-width="1.2"/></svg>
<div class="t" style="left:1270.90px;top:622.14px;font-size:12px;color:#fff;font-weight:bold;">Relative</div>
<svg class="r" style="left:1141px;top:642px" width="20" height="20" viewBox="0 0 20 20"><circle cx="10" cy="10" r="8.6" fill="none" stroke="#b8b8b8" stroke-width="1.2"/></svg>
<div class="t" style="left:1166.00px;top:647.14px;font-size:12px;color:#fff;font-weight:bold;">Blank</div>
<div class="r" style="left:1128px;top:673px;width:389px;height:27px;background:#d05a0a"></div>
<div class="t" style="left:1133.00px;top:681.74px;font-size:10.7px;color:#fff;">CASTUI SETTINGS</div>
<div class="r" style="left:1133px;top:704px;width:365px;height:26px;background:#d05a0a"></div>
<div class="t" style="left:1138.50px;top:712.24px;font-size:10.7px;color:#fff;">TOWER</div>
<div class="r" style="left:1133px;top:730px;width:365px;height:48px;border-left:1px solid #d05a0a;border-right:1px solid #d05a0a;box-sizing:border-box"></div>
<div class="t" style="left:1143.60px;top:740.84px;font-size:12px;color:#fff;">Name</div>
<div class="t" style="left:1143.60px;top:756.64px;font-size:12px;color:#fff;">Selection</div>
<div class="r" style="left:1238px;top:741px;width:255px;height:26px;border:1px solid #d0d0d0;box-sizing:border-box;background:#222"></div>
<div class="t" style="left:1244.50px;top:748.74px;font-size:12px;color:#fff;">Driver Name</div>
<svg class="r" style="left:1477px;top:751px" width="9" height="6" viewBox="0 0 9 6"><path d="M0 0 H9 L4.5 5Z" fill="#fff"/></svg>
<svg class="r" style="left:1499px;top:708px" width="12" height="8" viewBox="0 0 12 8"><path d="M0.5 7 L6 1.5 L11.5 7Z" fill="#a0a0a0"/></svg>
<div class="r" style="left:1499px;top:720px;width:12px;height:39px;background:#bdbdbd"></div>
<div class="r" style="left:1517px;top:66px;width:401px;height:96px;border:1px solid #d05a0a;box-sizing:border-box"></div>
<div class="r" style="left:1517px;top:66px;width:401px;height:26px;background:#d05a0a"></div>
<div class="t" style="left:1522.60px;top:74.76px;font-size:10.8px;color:#fff;">INSTANT REPLAY</div>
<div class="rb" style="left:1522px;top:96px;width:127px;height:27px;line-height:27px">-10S</div>
<div class="rb" style="left:1655px;top:96px;width:124px;height:27px;line-height:27px">-30S</div>
<div class="rb" style="left:1785px;top:96px;width:124px;height:27px;line-height:27px">-1M</div>
<div class="t" style="left:1525.00px;top:134.84px;font-size:12px;color:#fff;">Custom:</div>
<div class="r" style="left:1595px;top:126px;width:50px;height:28px;border:1px solid #c8c8c8;box-sizing:border-box"></div>
<div class="t" style="left:1037.50px;width:600px;text-align:right;top:134.22px;font-size:12.5px;color:#fff;">120</div>
<div class="t" style="left:1654.80px;top:134.84px;font-size:12px;color:#fff;">s, duration:</div>
<div class="r" style="left:1725px;top:126px;width:50px;height:28px;border:1px solid #c8c8c8;box-sizing:border-box"></div>
<div class="t" style="left:1167.00px;width:600px;text-align:right;top:134.22px;font-size:12.5px;color:#fff;">10</div>
<div class="t" style="left:1784.70px;top:134.84px;font-size:12px;color:#fff;">s</div>
<div class="rb" style="left:1795px;top:126px;width:114px;height:28px;line-height:28px">CUSTOM</div>
<div class="t" style="left:1524.50px;top:169.18px;font-size:22px;color:#d0601a;">Highlights</div>
<div class="t" style="left:1635.00px;top:170.02px;font-size:21px;color:#818181;">Pit Events</div>
<div class="t" style="left:1526.60px;top:202.42px;font-size:12.5px;color:#fff;font-weight:bold;">TYPE</div>
<div class="t" style="left:1626.00px;top:202.42px;font-size:12.5px;color:#fff;font-weight:bold;">TIME</div>
<div class="t" style="left:1686.60px;top:202.42px;font-size:12.5px;color:#fff;font-weight:bold;">MSG</div>
<div class="t" style="left:1776.00px;top:202.42px;font-size:12.5px;color:#fff;font-weight:bold;">NR</div>
<div class="r" style="left:1622px;top:198px;width:1px;height:19px;background:#d8d8d8"></div>
<div class="r" style="left:1682px;top:198px;width:1px;height:19px;background:#d8d8d8"></div>
<div class="r" style="left:1772px;top:198px;width:1px;height:19px;background:#d8d8d8"></div>
<div class="r" style="left:1814px;top:198px;width:1px;height:19px;background:#d8d8d8"></div>
<div class="r" style="left:1854px;top:198px;width:1px;height:19px;background:#d8d8d8"></div>
<div class="r" style="left:1912px;top:198px;width:1px;height:19px;background:#d8d8d8"></div>
</body></html>
